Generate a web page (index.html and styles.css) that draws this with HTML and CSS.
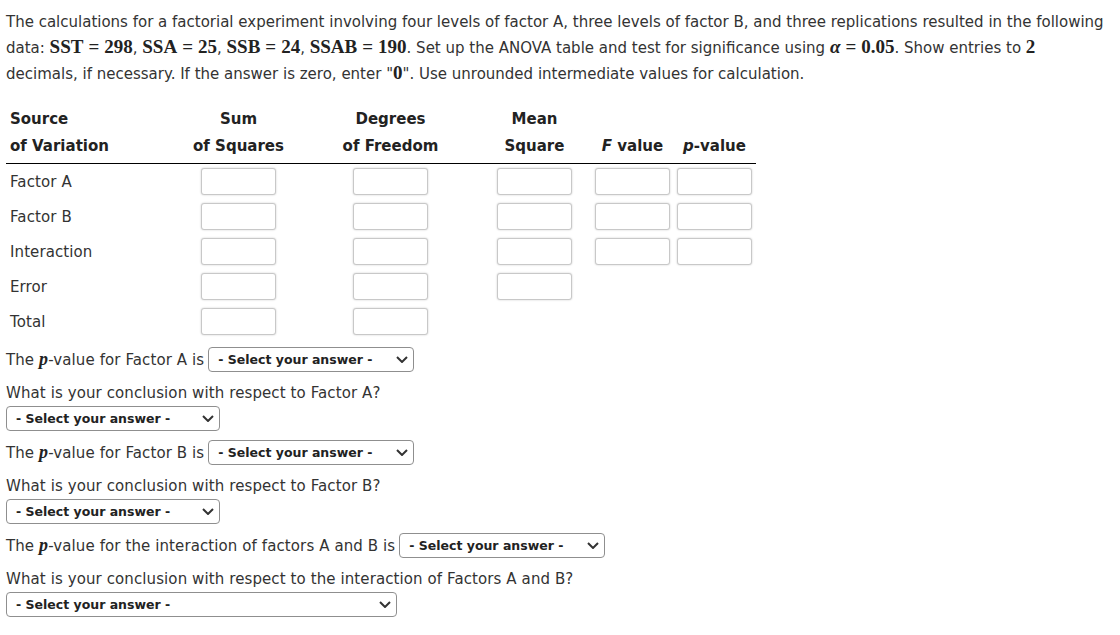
FILE: index.html
```html
<!DOCTYPE html>
<html lang="en">
<head>
<meta charset="utf-8">
<title>ANOVA factorial</title>
<link rel="stylesheet" href="styles.css">
</head>
<body>
<div class="page">
  <p class="intro">The calculations for a factorial experiment involving four levels of factor A, three levels of factor B, and three replications resulted in the following<br>data: <span class="m">SST<span class="rel">=</span>298</span>, <span class="m">SSA<span class="rel">=</span>25</span>, <span class="m">SSB<span class="rel">=</span>24</span>, <span class="m">SSAB<span class="rel">=</span>190</span>. Set up the ANOVA table and test for significance using <span class="m"><i>α</i><span class="rel">=</span>0.05</span>. Show entries to <span class="m">2</span><br>decimals, if necessary. If the answer is zero, enter "<span class="m">0</span>". Use unrounded intermediate values for calculation.</p>

  <div class="anova">
    <div class="hcell src">Source<br>of Variation</div>
    <div class="hcell"><div class="hwrap">Sum<br>of Squares</div></div>
    <div class="hcell"><div class="hwrap">Degrees<br>of Freedom</div></div>
    <div class="hcell"><div class="hwrap">Mean<br>Square</div></div>
    <div class="hcell"><div class="hwrap">&nbsp;<br><i>F</i> value</div></div>
    <div class="hcell"><div class="hwrap">&nbsp;<br><i>p</i>-value</div></div>

    <div class="cell label">Factor A</div>
    <div class="cell"><input class="box" type="text"></div>
    <div class="cell"><input class="box" type="text"></div>
    <div class="cell"><input class="box" type="text"></div>
    <div class="cell"><input class="box" type="text"></div>
    <div class="cell"><input class="box" type="text"></div>

    <div class="cell label">Factor B</div>
    <div class="cell"><input class="box" type="text"></div>
    <div class="cell"><input class="box" type="text"></div>
    <div class="cell"><input class="box" type="text"></div>
    <div class="cell"><input class="box" type="text"></div>
    <div class="cell"><input class="box" type="text"></div>

    <div class="cell label">Interaction</div>
    <div class="cell"><input class="box" type="text"></div>
    <div class="cell"><input class="box" type="text"></div>
    <div class="cell"><input class="box" type="text"></div>
    <div class="cell"><input class="box" type="text"></div>
    <div class="cell"><input class="box" type="text"></div>

    <div class="cell label">Error</div>
    <div class="cell"><input class="box" type="text"></div>
    <div class="cell"><input class="box" type="text"></div>
    <div class="cell"><input class="box" type="text"></div>
    <div class="cell"></div>
    <div class="cell"></div>

    <div class="cell label">Total</div>
    <div class="cell"><input class="box" type="text"></div>
    <div class="cell"><input class="box" type="text"></div>
    <div class="cell"></div>
    <div class="cell"></div>
    <div class="cell"></div>
  </div>

  <div class="qrow first">
    <span>The <i class="mp">p</i>-value for Factor A is</span>
    <span class="sel-wrap w206"><select><option>- Select your answer -</option></select><svg class="chev" viewBox="0 0 12 7"><path d="M1 1 L6 6 L11 1"/></svg></span>
  </div>
  <div class="qtext">What is your conclusion with respect to Factor A?</div>
  <span class="sel-wrap w214"><select><option>- Select your answer -</option></select><svg class="chev" viewBox="0 0 12 7"><path d="M1 1 L6 6 L11 1"/></svg></span>

  <div class="qrow">
    <span>The <i class="mp">p</i>-value for Factor B is</span>
    <span class="sel-wrap w206"><select><option>- Select your answer -</option></select><svg class="chev" viewBox="0 0 12 7"><path d="M1 1 L6 6 L11 1"/></svg></span>
  </div>
  <div class="qtext">What is your conclusion with respect to Factor B?</div>
  <span class="sel-wrap w214"><select><option>- Select your answer -</option></select><svg class="chev" viewBox="0 0 12 7"><path d="M1 1 L6 6 L11 1"/></svg></span>

  <div class="qrow">
    <span>The <i class="mp">p</i>-value for the interaction of factors A and B is</span>
    <span class="sel-wrap w206"><select><option>- Select your answer -</option></select><svg class="chev" viewBox="0 0 12 7"><path d="M1 1 L6 6 L11 1"/></svg></span>
  </div>
  <div class="qtext">What is your conclusion with respect to the interaction of Factors A and B?</div>
  <span class="sel-wrap w391"><select><option>- Select your answer -</option></select><svg class="chev" viewBox="0 0 12 7"><path d="M1 1 L6 6 L11 1"/></svg></span>
</div>
</body>
</html>
```

FILE: styles.css
```css
body {
  margin: 0;
  font-family: "DejaVu Sans", Verdana, sans-serif;
  font-size: 15px;
  letter-spacing: 0.1px;
  color: #333;
  background: #fff;
}

.page {
  padding: 9px 0 0 6px;
}

.intro {
  margin: 0;
  line-height: 26px;
  letter-spacing: 0;
  white-space: nowrap;
}

.m {
  font-family: "Liberation Serif", "Times New Roman", serif;
  font-weight: bold;
  font-size: 19px;
  line-height: 1;
  letter-spacing: 0;
  color: #222;
}

.m i {
  font-style: italic;
}

.rel {
  margin: 0 5px;
}

.mp {
  font-family: "Liberation Serif", serif;
  font-weight: bold;
  font-size: 18px;
  line-height: 1;
  color: #222;
}

.anova {
  display: grid;
  grid-template-columns: 195px 152px 144px 98px 82px 79px;
  width: 750px;
  margin-top: 19px;
}

.hcell {
  font-weight: bold;
  color: #222;
  line-height: 27px;
  padding-bottom: 3px;
  border-bottom: 1px solid #000;
  white-space: nowrap;
  letter-spacing: 0;
}

.hcell.src {
  padding-left: 4px;
}

.hwrap {
  width: 135px;
  margin-left: -30px;
  text-align: center;
}

.hcell i {
  font-family: "DejaVu Sans", sans-serif;
  font-style: italic;
}

.cell {
  height: 35px;
  display: flex;
  align-items: center;
}

.label {
  padding-left: 4px;
}

.box {
  width: 75px;
  height: 27px;
  box-sizing: border-box;
  margin: 0;
  padding: 0 4px;
  border: 1px solid #c8c8c8;
  border-radius: 3px;
  box-shadow: 0 0 2px rgba(0, 0, 0, 0.22);
  background: #fff;
}

.qrow {
  display: flex;
  align-items: center;
  gap: 4px;
  margin-top: 9px;
  line-height: 24px;
}

.qrow.first {
  margin-top: 8px;
}

.qtext {
  margin-top: 8px;
  line-height: 26px;
}

.sel-wrap {
  position: relative;
  display: inline-block;
  vertical-align: top;
}

.sel-wrap select {
  appearance: none;
  -webkit-appearance: none;
  width: 100%;
  height: 25px;
  margin: 0;
  padding: 0 24px 0 9px;
  font-family: "DejaVu Sans", Verdana, sans-serif;
  font-weight: bold;
  font-size: 12.5px;
  color: #222;
  background: #fff;
  border: 1px solid #8f8f8f;
  border-radius: 4px;
}

.w206 { width: 206px; }
.w214 { width: 214px; }
.w391 { width: 391px; }

.chev {
  position: absolute;
  right: 6px;
  top: 9px;
  width: 12px;
  height: 7px;
  fill: none;
  stroke: #333;
  stroke-width: 2;
  pointer-events: none;
}
```
